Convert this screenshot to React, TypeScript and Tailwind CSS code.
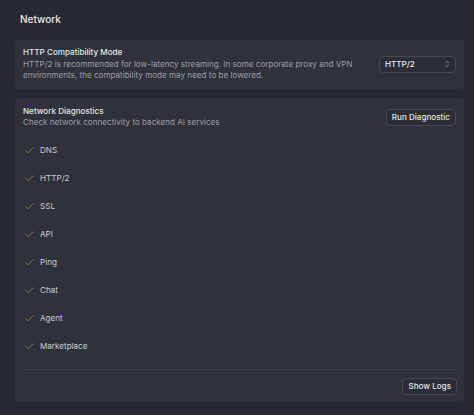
import { Check, ChevronsUpDown } from 'lucide-react';

const checks = ['DNS', 'HTTP/2', 'SSL', 'API', 'Ping', 'Chat', 'Agent', 'Marketplace'];

export default function App() {
  return (
    <div
      className="w-[474px] h-[415px] bg-[#262931] text-[#dfe1e6] overflow-hidden"
      style={{ fontFamily: 'Inter, "Noto Sans", sans-serif' }}
    >
      {/* Header */}
      <div className="h-[40px] pl-[20px] pt-[12px]">
        <h1 className="text-[10px] leading-[14px] font-medium text-[#e6e8ec]">Network</h1>
      </div>

      <div className="ml-[15px] mr-[10px] flex flex-col gap-[9px]">
        {/* HTTP mode card */}
        <div className="bg-[#2f323a] rounded-[4px] px-[8px] py-[7px] flex items-center justify-between gap-4">
          <div className="text-[8.1px] leading-[11.5px]">
            <div className="font-medium text-[#e2e4e8]">HTTP Compatibility Mode</div>
            <div className="text-[#9a9ea7] w-[340px]">
              HTTP/2 is recommended for low-latency streaming. In some corporate proxy and VPN
              environments, the compatibility mode may need to be lowered.
            </div>
          </div>
          <button className="w-[79px] h-[17px] rounded-[4px] border border-[#454953] bg-[#2b2e36] flex items-center justify-between pl-[5px] pr-[4px] text-[8.1px] font-medium text-[#eceef2]">
            <span>HTTP/2</span>
            <ChevronsUpDown size={8} strokeWidth={2.2} className="text-[#9a9ea7]" />
          </button>
        </div>

        {/* Diagnostics card */}
        <div className="bg-[#2f323a] rounded-[4px] flex flex-col">
          <div className="px-[8px] pt-[8px] flex items-center justify-between">
            <div className="text-[8.1px] leading-[11.5px]">
              <div className="font-medium text-[#e2e4e8]">Network Diagnostics</div>
              <div className="text-[#9a9ea7]">Check network connectivity to backend AI services</div>
            </div>
            <button className="h-[17px] px-[5px] rounded-[4px] border border-[#454953] bg-[#2b2e36] text-[8.1px] font-medium text-[#e2e4e8]">
              Run Diagnostic
            </button>
          </div>

          <div className="mt-[8px] px-[9px] flex flex-col">
            {checks.map((c) => (
              <div key={c} className="h-[28px] flex items-center gap-[5px]">
                <Check size={11} strokeWidth={1.6} className="text-[#7f9a6f]" />
                <span className="text-[8.1px] text-[#c9ccd3]">{c}</span>
              </div>
            ))}
          </div>

          <div className="mt-[8px] mx-[7px] border-t border-[#3a3d46] pt-[8px] pb-[7px] flex justify-end">
            <button className="h-[17px] px-[5px] rounded-[4px] border border-[#454953] bg-[#2b2e36] text-[8.1px] font-medium text-[#e2e4e8]">
              Show Logs
            </button>
          </div>
        </div>
      </div>
    </div>
  );
}
